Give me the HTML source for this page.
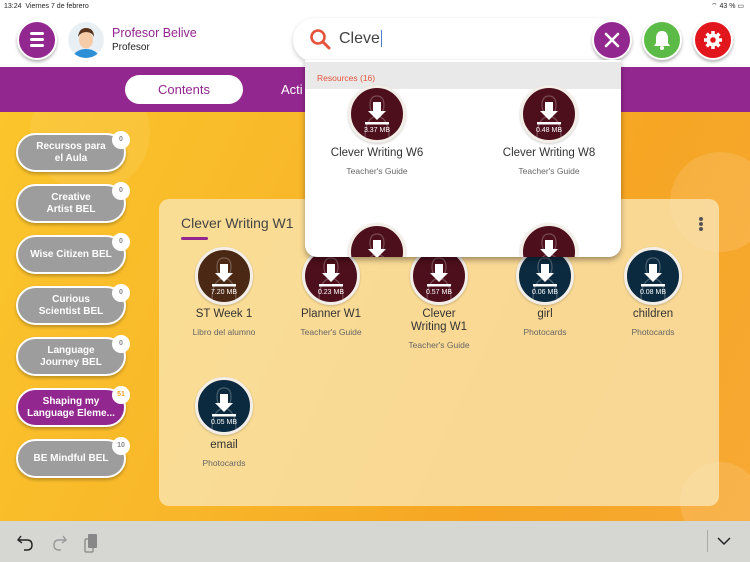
<!DOCTYPE html>
<html><head><meta charset="utf-8"><style>
*{margin:0;padding:0;box-sizing:border-box}
body{width:750px;height:562px;overflow:hidden;position:relative;font-family:"Liberation Sans",sans-serif;background:#fff}
.abs{position:absolute}
.status{top:3px;left:4px;font-size:7px;color:#222}
.bg{top:112px;left:0;width:750px;height:410px;background:linear-gradient(115deg,#fbc52b 0%,#f8b62a 40%,#f6a623 70%,#f7a934 100%)}
.purple{top:67px;left:0;width:750px;height:45px;background:#932790}
.pill{position:absolute;left:16px;width:110px;height:39px;border-radius:20px;background:#9d9d9d;border:2px solid #fff;box-shadow:0 2px 3px rgba(0,0,0,.25);color:#fff;font-weight:bold;font-size:10px;text-align:center;display:flex;align-items:center;justify-content:center;line-height:11.5px}
.badge{position:absolute;right:-6px;top:-4px;width:18px;height:18px;border-radius:50%;background:#fff;color:#888;font-size:7px;font-weight:bold;display:flex;align-items:center;justify-content:center}
.ic{position:absolute;width:58px;height:58px;border-radius:50%;border:3px solid #f3efe8;box-shadow:0 1px 2px rgba(0,0,0,.2);overflow:hidden}
.ic svg{position:absolute;left:0;top:0}
.t{position:absolute;width:110px;text-align:center;color:#333;font-size:11.5px}
.s{position:absolute;width:110px;text-align:center;color:#666;font-size:8.5px}
.circ{position:absolute;border-radius:50%;box-shadow:0 2px 3px rgba(0,0,0,.3);border:2px solid #fff}
</style></head><body>
<div class="abs status">13:24 &nbsp;Viernes 7 de febrero</div>
<div class="abs" style="top:2px;right:6px;font-size:7px;color:#222">⌔ 43 % ▭</div>
<div class="abs purple"></div>
<div class="abs bg"></div>
<svg class="abs" style="left:0;top:112px" width="750" height="410"><circle cx="90" cy="20" r="60" fill="#fff" opacity=".08"/><circle cx="720" cy="90" r="50" fill="#fff" opacity=".12"/><circle cx="720" cy="390" r="40" fill="#fff" opacity=".12"/></svg>

<div class="circ" style="left:17px;top:20px;width:40px;height:40px;background:#932790"></div>
<div class="abs" style="left:30px;top:32px;width:14px;height:3px;background:#fff;border-radius:2px;box-shadow:0 6px 0 #fff,0 12px 0 #fff"></div>
<div class="abs" style="left:68px;top:22px;width:36px;height:36px;border-radius:50%;background:#e9f0f5;overflow:hidden">
<svg width="36" height="36"><ellipse cx="18" cy="36" rx="13" ry="9" fill="#2d8fd6"/><ellipse cx="18" cy="18" rx="7" ry="8.5" fill="#f6cba7"/><path d="M10 15 Q11 6 18 6 Q26 6 26 15 Q24 10 18 10 Q13 10 10 15Z" fill="#5a3620"/></svg></div>
<div class="abs" style="left:112px;top:26px;font-size:12.5px;color:#932790">Profesor Belive</div>
<div class="abs" style="left:112px;top:42px;font-size:10px;color:#222">Profesor</div>

<div class="abs" style="left:293px;top:18px;width:330px;height:44px;border-radius:22px;background:#fff;box-shadow:0 2px 5px rgba(0,0,0,.2)"></div>
<svg class="abs" style="left:309px;top:28px" width="22" height="22"><circle cx="9" cy="9" r="6.5" stroke="#e5543a" stroke-width="2.6" fill="none"/><path d="M14 14 L20 20" stroke="#e5543a" stroke-width="3" stroke-linecap="round"/></svg>
<div class="abs" style="left:339px;top:30px;font-size:16px;color:#444">Cleve<span style="border-left:1px solid #4a7fd6;margin-left:1px"></span></div>
<div class="circ" style="left:592px;top:20px;width:40px;height:40px;background:#932790"></div>
<svg class="abs" style="left:602px;top:30px" width="20" height="20"><path d="M4 4L16 16M16 4L4 16" stroke="#fff" stroke-width="2.6" stroke-linecap="round"/></svg>
<div class="circ" style="left:642px;top:20px;width:40px;height:40px;background:#5bbb46"></div>
<svg class="abs" style="left:652px;top:29px" width="20" height="22"><path d="M10 2C6 2 4 5 4 9V14L2 17H18L16 14V9C16 5 14 2 10 2Z" fill="#fff"/><circle cx="10" cy="19" r="2" fill="#fff"/></svg>
<div class="circ" style="left:693px;top:20px;width:40px;height:40px;background:#e2171d"></div>
<svg class="abs" style="left:703px;top:30px" width="20" height="20"><g fill="#fff"><circle cx="10" cy="10" r="6.5"/><g stroke="#fff" stroke-width="3.5"><path d="M10 1V19M1 10H19M3.6 3.6L16.4 16.4M16.4 3.6L3.6 16.4"/></g></g><circle cx="10" cy="10" r="2.8" fill="#e2171d"/></svg>

<div class="abs" style="left:125px;top:75px;width:118px;height:29px;border-radius:15px;background:#fff;color:#932790;font-size:13px;text-align:center;line-height:29px">Contents</div>
<div class="abs" style="left:281px;top:82px;font-size:13px;color:#fff">Acti</div>

<div class="pill" style="top:133px">Recursos para<br>el Aula<div class="badge">0</div></div>
<div class="pill" style="top:184px">Creative<br>Artist BEL<div class="badge">0</div></div>
<div class="pill" style="top:235px">Wise Citizen BEL<div class="badge">0</div></div>
<div class="pill" style="top:286px">Curious<br>Scientist BEL<div class="badge">0</div></div>
<div class="pill" style="top:337px">Language<br>Journey BEL<div class="badge">0</div></div>
<div class="pill" style="top:388px;background:#932790">Shaping my<br>Language Eleme...<div class="badge" style="color:#f0a020">51</div></div>
<div class="pill" style="top:439px">BE Mindful BEL<div class="badge">10</div></div>

<div class="abs" style="left:159px;top:199px;width:560px;height:307px;border-radius:10px;background:rgba(250,232,185,.75)"></div>
<div class="abs" style="left:181px;top:215px;font-size:14px;color:#444">Clever Writing W1</div>
<div class="abs" style="left:181px;top:237px;width:27px;height:3px;border-radius:2px;background:#932790"></div>
<div class="abs" style="left:699px;top:217px;width:4px;height:4px;border-radius:50%;background:#555;box-shadow:0 5px 0 #555,0 10px 0 #555"></div>

<div id="items"></div>
<script>
function icon(cx,cy,col,size){
 return `<div class="ic" style="left:${cx-29}px;top:${cy-29}px;background:${col}"><svg width="52" height="52"><path d="M14 50 Q14 30 26 28 Q38 30 38 50 M19 17 Q19 8 26 8 Q33 8 33 17 Q33 26 26 26 Q19 26 19 17" stroke="rgba(255,255,255,.25)" fill="none" stroke-width="1.2"/><path d="M22 14H30V23H35L26 32L17 23H22Z" fill="#fff"/><rect x="14" y="34" width="24" height="2.5" fill="#fff"/><text x="26" y="44" font-size="7" fill="#fff" text-anchor="middle" font-family="Liberation Sans">${size}</text></svg></div>`;
}
const R='#4d0f1c',B='#0c2a3f',Br='#4b2814';
let h='';
[[224,276,Br,'7.20 MB','ST Week 1','Libro del alumno',314],[331,276,R,'0.23 MB','Planner W1',"Teacher's Guide",314],[439,276,R,'0.57 MB','Clever<br>Writing W1',"Teacher's Guide",314],[545,276,B,'0.06 MB','girl','Photocards',314],[653,276,B,'0.08 MB','children','Photocards',314],[224,406,B,'0.05 MB','email','Photocards',445]].forEach(a=>{
 h+=icon(a[0],a[1],a[2],a[3]);
 const two=a[4].includes('<br>');
 h+=`<div class="t" style="left:${a[0]-55}px;top:${a[6]-6}px;line-height:13px">${a[4]}</div>`;
 h+=`<div class="s" style="left:${a[0]-55}px;top:${a[6]+(two?26:13)}px">${a[5]}</div>`;
});
h+=`<div class="abs" style="left:305px;top:60px;width:316px;height:197px;background:#fff;border-radius:0 0 12px 12px;box-shadow:0 3px 6px rgba(0,0,0,.35);overflow:hidden"><div style="height:27px;margin-top:2px;background:#e9e9e9;color:#e5543a;font-size:8.5px;padding:11px 0 0 12px">Resources (16)</div>`;
h+=`<div style="position:absolute;left:0;top:0;width:316px;height:197px">`;
h+=icon(72,54,R,'3.37 MB')+icon(244,54,R,'0.48 MB')+icon(72,192,R,'')+icon(244,192,R,'');
h+=`<div class="t" style="left:17px;top:87px">Clever Writing W6</div><div class="s" style="left:17px;top:106px">Teacher's Guide</div>`;
h+=`<div class="t" style="left:189px;top:87px">Clever Writing W8</div><div class="s" style="left:189px;top:106px">Teacher's Guide</div></div></div>`;
document.getElementById('items').innerHTML=h;
</script>

<div class="abs" style="left:0;top:521px;width:750px;height:41px;background:#d6d6d2"></div>
<svg class="abs" style="left:16px;top:531px" width="90" height="22"><path d="M5 5L2 9L6 12M2 9H11Q16 9 16 14Q16 19 11 19H8" stroke="#222" stroke-width="1.4" fill="none"/><path d="M47 5L50 9L46 12M50 9H43Q38 9 38 14Q38 19 43 19H45" stroke="#999" stroke-width="1.4" fill="none"/><rect x="69" y="8" width="8" height="13" rx="1" fill="none" stroke="#888" stroke-width="1.3"/><rect x="72" y="3" width="9" height="14" rx="1" fill="#888"/></svg>
<div class="abs" style="left:707px;top:530px;width:1px;height:22px;background:#aaa"></div>
<svg class="abs" style="left:717px;top:536px" width="14" height="10"><path d="M1 2L7 8L13 2" stroke="#222" stroke-width="1.5" fill="none"/></svg>
</body></html>
